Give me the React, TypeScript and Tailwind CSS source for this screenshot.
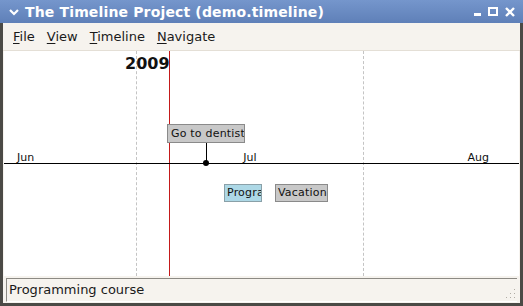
import React from 'react';

const menus = [
  { key: 'F', rest: 'ile' },
  { key: 'V', rest: 'iew' },
  { key: 'T', rest: 'imeline' },
  { key: 'N', rest: 'avigate' },
];

export default function App() {
  return (
    <div
      className="w-[523px] h-[306px] flex flex-col bg-[#4b4a46] px-[3px] pb-[3px] overflow-hidden"
      style={{ fontFamily: '"DejaVu Sans", Verdana, sans-serif' }}
    >
      {/* title bar */}
      <div className="h-[23px] -mx-[3px] flex items-center bg-gradient-to-b from-[#7596cc] to-[#5f80b8] text-white">
        <svg width="12" height="12" viewBox="0 0 12 12" className="ml-[8px] mr-[5px]">
          <path d="M2 4 L6 8 L10 4" stroke="white" strokeWidth="2.2" fill="none" />
        </svg>
        <span className="font-bold text-[14px] leading-none tracking-[0.15px]">The Timeline Project (demo.timeline)</span>
        <div className="ml-auto flex items-center gap-[7px] mr-[8px]">
          <div className="w-[7px] h-[3px] bg-white mt-[6px]" />
          <div className="w-[10px] h-[9px] border-2 border-white" />
          <svg width="10" height="10" viewBox="0 0 10 10">
            <path d="M1 1 L9 9 M9 1 L1 9" stroke="white" strokeWidth="2.4" />
          </svg>
        </div>
      </div>

      <div className="flex-1 flex flex-col bg-[#f6f3ee]">
        {/* menu bar */}
        <div className="h-[28px] flex items-center pl-[10px] gap-[12px] text-[13px] text-[#1a1a1a] border-b border-[#e4dfd6]">
          {menus.map((m) => (
            <span key={m.key}>
              <span className="underline underline-offset-2">{m.key}</span>
              {m.rest}
            </span>
          ))}
        </div>

        {/* timeline canvas */}
        <div className="relative h-[225px] bg-white mx-[1px] overflow-hidden text-[#111]">
          <div className="absolute left-[132px] top-0 bottom-0 border-l border-dashed border-[#c4c4c4]" />
          <div className="absolute left-[359px] top-0 bottom-0 border-l border-dashed border-[#c4c4c4]" />
          <svg width="2" height="225" className="absolute left-[164px] top-0">
            <line x1="1.5" y1="0" x2="1.5" y2="225" stroke="#c41a1a" strokeWidth="1" />
          </svg>

          <div className="absolute left-[121px] top-[3px] font-bold text-[16px] leading-[20px]">2009</div>

          {/* axis */}
          <div className="absolute left-0 right-0 top-[112px] h-px bg-black" />
          <div className="absolute left-0 right-0 top-[101px] flex text-[11px] leading-none">
            <span className="ml-[13px]">Jun</span>
            <span className="ml-[209px]">Jul</span>
            <span className="ml-[211px]">Aug</span>
          </div>

          {/* event above axis */}
          <div className="absolute left-[163px] top-[73px] w-[78px] h-[19px] bg-[#c8c8c8] border border-[#8a8a8a] text-[11px] tracking-[0.2px] leading-[17px] pl-[3px] whitespace-nowrap overflow-hidden">
            Go to dentist
          </div>
          <div className="absolute left-[202px] top-[92px] w-px h-[20px] bg-black" />
          <div className="absolute left-[199px] top-[109px] w-[6px] h-[6px] rounded-full bg-black" />

          {/* periods */}
          <div className="absolute left-[220px] top-[133px] w-[38px] h-[18px] bg-[#add8e6] border border-[#8aa0a8] text-[11px] tracking-[0.2px] leading-[16px] pl-[2px] whitespace-nowrap overflow-hidden">
            Programming course
          </div>
          <div className="absolute left-[271px] top-[133px] w-[53px] h-[18px] bg-[#c8c8c8] border border-[#8a8a8a] text-[11px] tracking-[0.2px] leading-[16px] pl-[2px] whitespace-nowrap overflow-hidden">
            Vacation
          </div>
        </div>

        {/* status bar */}
        <div className="flex-1 flex items-stretch px-[3px] pt-[2px] pb-[1px]">
          <div className="relative flex-1 flex items-center border-t border-l border-[#8c8a84] border-b border-b-white pl-[2px] text-[13px] text-[#1a1a1a]">
            Programming course
            <svg width="12" height="12" viewBox="0 0 12 12" className="absolute right-[1px] bottom-[2px]">
              {[[10, 2], [10, 6], [6, 6], [10, 10], [6, 10], [2, 10]].map(([x, y]) => (
                <rect key={`${x}-${y}`} x={x} y={y} width="1" height="1" fill="#b0aca4" />
              ))}
            </svg>
          </div>
        </div>
      </div>
    </div>
  );
}
